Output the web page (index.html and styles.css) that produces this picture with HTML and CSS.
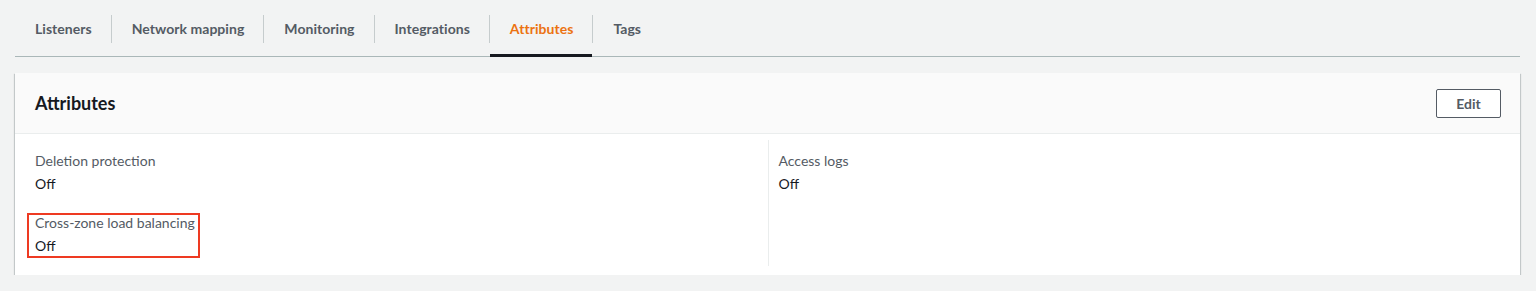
FILE: index.html
```html
<!DOCTYPE html>
<html lang="en">
<head>
<meta charset="utf-8">
<title>Attributes</title>
<link rel="stylesheet" href="styles.css">
</head>
<body>
<div class="page">
  <nav class="tabs">
    <div class="tab"><span class="tab-label">Listeners</span></div>
    <div class="tab"><span class="tab-label">Network mapping</span></div>
    <div class="tab"><span class="tab-label">Monitoring</span></div>
    <div class="tab"><span class="tab-label">Integrations</span></div>
    <div class="tab active"><span class="tab-label">Attributes</span></div>
    <div class="tab last"><span class="tab-label">Tags</span></div>
  </nav>
  <section class="card">
    <header class="card-header">
      <h2 class="card-title">Attributes</h2>
      <button class="btn">Edit</button>
    </header>
    <div class="card-body">
      <div class="col">
        <div class="pair">
          <div class="key">Deletion protection</div>
          <div class="value">Off</div>
        </div>
        <div class="pair highlight">
          <div class="key">Cross-zone load balancing</div>
          <div class="value">Off</div>
        </div>
      </div>
      <div class="col right">
        <div class="pair">
          <div class="key">Access logs</div>
          <div class="value">Off</div>
        </div>
      </div>
    </div>
  </section>
</div>
</body>
</html>
```
FILE: styles.css
```css
* { box-sizing: border-box; }
html, body { margin: 0; padding: 0; }
body {
  background: #f2f3f3;
  font-family: Lato, "Liberation Sans", Arial, sans-serif;
  color: #16191f;
  font-size: 14px;
}
.page { padding: 0 16px 0 15px; }

.tabs {
  display: flex;
  align-items: stretch;
  height: 57px;
  border-bottom: 1px solid #aab7b8;
  padding-top: 15px;
}
.tab {
  display: flex;
  align-items: flex-start;
  position: relative;
  border-right: 1px solid #c6cccd;
  height: 28px;
  padding: 0 19px 0 20px;
}
.tab.last { border-right: none; }
.tab-label {
  font-weight: 700;
  font-size: 14px;
  line-height: 28px;
  color: #545b64;
  letter-spacing: 0.04px;
}
.tab.active .tab-label { color: #ec7211; }
.tab.active::after {
  content: "";
  position: absolute;
  left: 0;
  right: 0;
  bottom: -14px;
  height: 3px;
  background: #16191f;
}

.card {
  margin-top: 16px;
  background: #fff;
  box-shadow: 0 1px 1px 0 rgba(0, 28, 36, 0.3), 1px 1px 1px 0 rgba(0, 28, 36, 0.15), -1px 1px 1px 0 rgba(0, 28, 36, 0.15);
}
.card-header {
  display: flex;
  align-items: center;
  justify-content: space-between;
  height: 61px;
  padding: 0 19px 0 20px;
  background: #fafafa;
  border-bottom: 1px solid #eaeded;
}
.card-title {
  margin: 0;
  font-size: 18px;
  font-weight: 700;
  color: #16191f;
}
.btn {
  font-family: inherit;
  font-size: 14px;
  font-weight: 700;
  color: #545b64;
  background: #fff;
  border: 1px solid #545b64;
  border-radius: 2px;
  width: 65px;
  height: 29px;
  padding: 0;
}

.card-body {
  display: grid;
  grid-template-columns: 1fr 1fr;
  padding: 6px 0 9px;
}
.col {
  padding: 10px 20px 8px;
  display: flex;
  flex-direction: column;
  align-items: flex-start;
  gap: 16px;
}
.col.right {
  border-left: 1px solid #eaeded;
  padding-left: 10px;
}
.pair { position: relative; }
.key {
  color: #545b64;
  font-size: 14px;
  line-height: 22px;
}
.value {
  color: #16191f;
  font-size: 14px;
  line-height: 24px;
}
.highlight::after {
  content: "";
  position: absolute;
  left: -8px;
  right: -5px;
  top: 1px;
  bottom: 0;
  border: 2px solid #ee3a22;
}
```
